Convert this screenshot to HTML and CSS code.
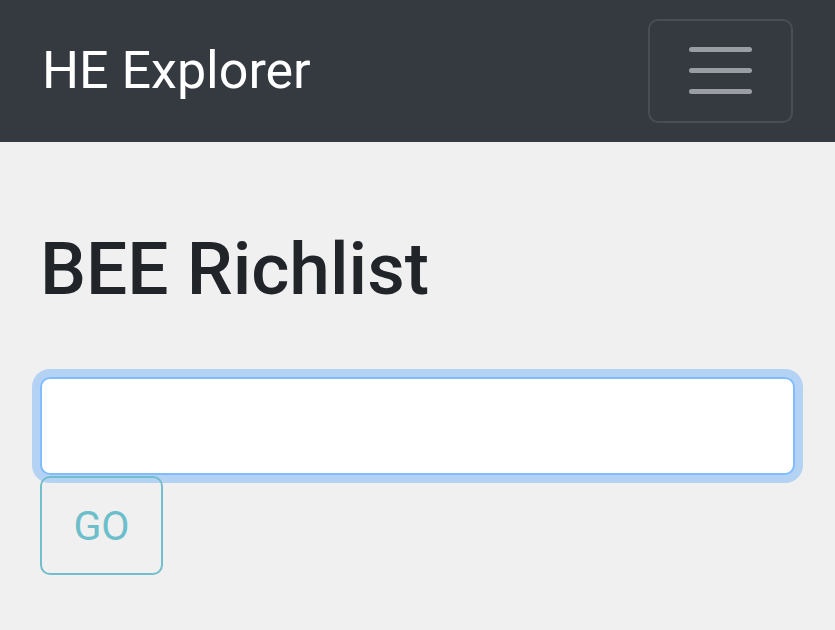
FILE: index.html
```html
<!DOCTYPE html>
<html lang="en">
<head>
  <meta charset="UTF-8" />
  <meta name="viewport" content="width=device-width, initial-scale=1.0" />
  <title>HE Explorer</title>
  <link rel="stylesheet" href="styles.css">
</head>
<body>
  <nav class="navbar">
    <span class="brand">HE Explorer</span>
    <button class="toggler" aria-label="Menu">
      <span class="bar"></span>
      <span class="bar"></span>
      <span class="bar"></span>
    </button>
  </nav>

  <main class="content">
    <h2 class="title">BEE Richlist</h2>
    <form class="search" onsubmit="return false">
      <input class="search-input" type="text" />
      <button class="go" type="submit">GO</button>
    </form>
  </main>
</body>
</html>
```

FILE: styles.css
```css
* { box-sizing: border-box; }
body {
  margin: 0;
  font-family: Roboto, "Noto Sans", sans-serif;
  background: #f0f0f0;
  color: #212529;
}
.navbar {
  height: 142px;
  background: #343a40;
  display: flex;
  justify-content: space-between;
  align-items: center;
  padding: 0 42px 0 42px;
}
.brand {
  color: #fff;
  font-size: 52px;
  font-weight: 400;
  margin-top: -2px;
}
.toggler {
  width: 145px;
  height: 104px;
  margin-top: -1px;
  background: transparent;
  border: 2px solid rgba(255,255,255,0.1);
  border-radius: 10px;
  display: flex;
  flex-direction: column;
  align-items: center;
  justify-content: center;
  gap: 16px;
  padding: 0;
}
.toggler .bar {
  display: block;
  width: 63px;
  height: 5px;
  border-radius: 3px;
  background: #9a9ea4;
}
.content {
  padding: 0 40px;
}
.title {
  margin: 0;
  padding-top: 83px;
  font-size: 73px;
  font-weight: 500;
  line-height: 88px;
}
.search {
  margin-top: 64px;
}
.search-input {
  display: block;
  width: 100%;
  height: 98px;
  border: 2px solid #80bdff;
  border-radius: 10px;
  background: #fff;
  box-shadow: 0 0 0 8px rgba(0,123,255,0.25);
  outline: none;
  font-size: 41px;
  padding: 0 30px;
}
.go {
  display: block;
  margin-top: 1px;
  width: 123px;
  height: 99px;
  background: transparent;
  border: 2px solid #72bfcb;
  border-radius: 10px;
  color: #6cbfca;
  font-family: Roboto, sans-serif;
  font-size: 41px;
  padding: 0;
}
```
